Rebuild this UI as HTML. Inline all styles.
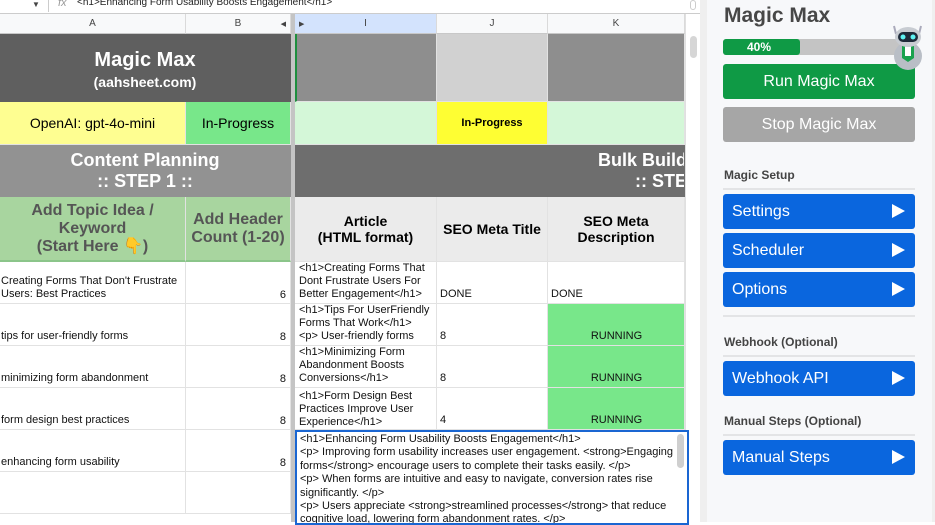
<!DOCTYPE html>
<html><head><meta charset="utf-8"><style>
*{margin:0;padding:0;box-sizing:border-box}
body{width:935px;height:522px;overflow:hidden;background:#fff;font-family:"Liberation Sans",Arial,sans-serif;position:relative}
.a{position:absolute}
.c{position:absolute;border-right:1px solid #e2e2e2;border-bottom:1px solid #e2e2e2;display:flex;align-items:center;justify-content:center;text-align:center;overflow:hidden}
.hd{font-size:10px;color:#444;background:#f8f9fa;border-right:1px solid #dadada;border-bottom:1px solid #c8c8c8}
.t{font-size:11px;color:#111;line-height:13px;justify-content:flex-start;text-align:left;align-items:flex-end;padding:0 0 2px 1px;white-space:nowrap}
.n{font-size:11px;color:#111;justify-content:flex-end;align-items:flex-end;padding:0 4px 2px 0}
.btn{position:absolute;left:723px;width:192px;height:35px;border-radius:3px;color:#fff;font-size:16px;display:flex;align-items:center}
.blue{background:#0a66de;padding-left:9px}
.blue:after{content:"";position:absolute;right:10px;top:10px;border-left:13px solid #fff;border-top:7.5px solid transparent;border-bottom:7.5px solid transparent}
.lbl{position:absolute;left:724px;font-size:12px;font-weight:bold;color:#444}
.sep{position:absolute;left:723px;width:192px;height:2px;background:#e3e4e6}
</style></head><body>
<div class="a" style="left:0;top:0;width:700px;height:14px;background:#fff;border-bottom:1px solid #ccc"></div>
<div class="a" style="left:32px;top:0;font-size:8px;color:#444">▼</div>
<div class="a" style="left:48px;top:0;width:1px;height:12px;background:#ccc"></div>
<div class="a" style="left:58px;top:-3px;font-size:11px;color:#999;font-style:italic">fx</div>
<div class="a" style="left:77px;top:-3px;font-size:10px;color:#222">&lt;h1&gt;Enhancing Form Usability Boosts Engagement&lt;/h1&gt;</div>
<div class="a" style="left:690px;top:0;width:6px;height:10px;border:1px solid #ccc;border-radius:3px"></div>
<div class="c hd" style="left:0;top:14px;width:186px;height:20px">A</div>
<div class="c hd" style="left:186px;top:14px;width:105px;height:20px">B<span style="position:absolute;right:4px;font-size:7px">◀</span></div>
<div class="a" style="left:291px;top:14px;width:4px;height:508px;background:#c4c4c4"></div>
<div class="c hd" style="left:295px;top:14px;width:142px;height:20px;background:#d3e3fd">I<span style="position:absolute;left:4px;font-size:7px">▶</span></div>
<div class="c hd" style="left:437px;top:14px;width:111px;height:20px">J</div>
<div class="c hd" style="left:548px;top:14px;width:137px;height:20px">K</div>
<div class="a" style="left:685px;top:14px;width:15px;height:508px;background:#fff;border-left:1px solid #e0e0e0"></div>
<div class="a" style="left:690px;top:36px;width:7px;height:22px;background:#d6d6d6;border-radius:4px"></div>
<div class="c" style="left:0;top:34px;width:291px;height:68px;background:#5f5f5f;color:#fff;flex-direction:column;border-color:#5f5f5f;padding-top:4px"><div style="font-size:20px;font-weight:bold">Magic Max</div><div style="font-size:14px;font-weight:bold;margin-top:2px">(aahsheet.com)</div></div>
<div class="c" style="left:295px;top:34px;width:142px;height:68px;background:#8e8e8e;border-left:2px solid #1e8e3e"></div>
<div class="c" style="left:437px;top:34px;width:111px;height:68px;background:#d1d1d1"></div>
<div class="c" style="left:548px;top:34px;width:137px;height:68px;background:#8e8e8e"></div>
<div class="c" style="left:0;top:102px;width:186px;height:43px;background:#fefe91;font-size:14px">OpenAI: gpt-4o-mini</div>
<div class="c" style="left:186px;top:102px;width:105px;height:43px;background:#78e78a;font-size:14px">In-Progress</div>
<div class="c" style="left:295px;top:102px;width:142px;height:43px;background:#d4f7d8"></div>
<div class="c" style="left:437px;top:102px;width:111px;height:43px;background:#fefe33;font-size:11px;font-weight:bold">In-Progress</div>
<div class="c" style="left:548px;top:102px;width:137px;height:43px;background:#d4f7d8"></div>
<div class="c" style="left:0;top:145px;width:291px;height:52px;background:#929292;color:#fff;font-size:18px;font-weight:bold;line-height:21px;border-color:#929292">Content Planning<br>:: STEP 1 ::</div>
<div class="c" style="left:295px;top:145px;width:390px;height:52px;background:#6e6e6e;color:#fff;font-size:18px;font-weight:bold;line-height:21px;justify-content:flex-end;text-align:right;padding-right:0;border-color:#6e6e6e;white-space:nowrap"><div style="margin-right:-3px">Bulk Build<br>:: STE</div></div>
<div class="c" style="left:0;top:197px;width:186px;height:65px;background:#a8d59f;color:#555;font-size:16px;font-weight:bold;line-height:18px;border-bottom:2px solid #8bc58a">Add Topic Idea /<br>Keyword<br>(Start Here 👇)</div>
<div class="c" style="left:186px;top:197px;width:105px;height:65px;background:#a8d59f;color:#555;font-size:16px;font-weight:bold;line-height:18px;border-bottom:2px solid #8bc58a">Add Header<br>Count (1-20)</div>
<div class="c" style="left:295px;top:197px;width:142px;height:65px;background:#ebebeb;font-size:14px;font-weight:bold;line-height:16px">Article<br>(HTML format)</div>
<div class="c" style="left:437px;top:197px;width:111px;height:65px;background:#ebebeb;font-size:14px;font-weight:bold">SEO Meta Title</div>
<div class="c" style="left:548px;top:197px;width:137px;height:65px;background:#ebebeb;font-size:14px;font-weight:bold;line-height:16px">SEO Meta<br>Description</div>

<div class="c t" style="left:0;top:262px;width:186px;height:42px">Creating Forms That Don't Frustrate<br>Users: Best Practices</div>
<div class="c n" style="left:186px;top:262px;width:105px;height:42px">6</div>
<div class="c t" style="left:295px;top:262px;width:142px;height:42px;padding-left:4px">&lt;h1&gt;Creating Forms That<br>Dont Frustrate Users For<br>Better Engagement&lt;/h1&gt;</div>
<div class="c t" style="left:437px;top:262px;width:111px;height:42px;padding-left:3px">DONE</div>
<div class="c t" style="left:548px;top:262px;width:137px;height:42px;padding-left:3px">DONE</div>

<div class="c t" style="left:0;top:304px;width:186px;height:42px">tips for user-friendly forms</div>
<div class="c n" style="left:186px;top:304px;width:105px;height:42px">8</div>
<div class="c t" style="left:295px;top:304px;width:142px;height:42px;padding-left:4px">&lt;h1&gt;Tips For UserFriendly<br>Forms That Work&lt;/h1&gt;<br>&lt;p&gt; User-friendly forms</div>
<div class="c t" style="left:437px;top:304px;width:111px;height:42px;padding-left:3px">8</div>
<div class="c t" style="left:548px;top:304px;width:137px;height:42px;background:#78e78a;justify-content:center">RUNNING</div>

<div class="c t" style="left:0;top:346px;width:186px;height:42px">minimizing form abandonment</div>
<div class="c n" style="left:186px;top:346px;width:105px;height:42px">8</div>
<div class="c t" style="left:295px;top:346px;width:142px;height:42px;padding-left:4px">&lt;h1&gt;Minimizing Form<br>Abandonment Boosts<br>Conversions&lt;/h1&gt;</div>
<div class="c t" style="left:437px;top:346px;width:111px;height:42px;padding-left:3px">8</div>
<div class="c t" style="left:548px;top:346px;width:137px;height:42px;background:#78e78a;justify-content:center">RUNNING</div>

<div class="c t" style="left:0;top:388px;width:186px;height:42px">form design best practices</div>
<div class="c n" style="left:186px;top:388px;width:105px;height:42px">8</div>
<div class="c t" style="left:295px;top:388px;width:142px;height:42px;padding-left:4px;align-items:flex-start;padding-top:2px">&lt;h1&gt;Form Design Best<br>Practices Improve User<br>Experience&lt;/h1&gt;</div>
<div class="c t" style="left:437px;top:388px;width:111px;height:42px;padding-left:3px">4</div>
<div class="c t" style="left:548px;top:388px;width:137px;height:42px;background:#78e78a;justify-content:center">RUNNING</div>

<div class="c t" style="left:0;top:430px;width:186px;height:42px">enhancing form usability</div>
<div class="c n" style="left:186px;top:430px;width:105px;height:42px">8</div>
<div class="c" style="left:0;top:472px;width:186px;height:42px"></div>
<div class="c" style="left:186px;top:472px;width:105px;height:42px"></div>
<div class="a" style="left:295px;top:430px;width:394px;height:95px;background:#fff;border:2px solid #1a66d2;font-size:11px;line-height:13.4px;color:#111;padding:1px 14px 0 3px;overflow:hidden">&lt;h1&gt;Enhancing Form Usability Boosts Engagement&lt;/h1&gt;<br>&lt;p&gt; Improving form usability increases user engagement. &lt;strong&gt;Engaging forms&lt;/strong&gt; encourage users to complete their tasks easily. &lt;/p&gt;<br>&lt;p&gt; When forms are intuitive and easy to navigate, conversion rates rise significantly. &lt;/p&gt;<br>&lt;p&gt; Users appreciate &lt;strong&gt;streamlined processes&lt;/strong&gt; that reduce cognitive load, lowering form abandonment rates. &lt;/p&gt;<br>&lt;p&gt; Statistics show that simple forms can boost conversions</div>
<div class="a" style="left:677px;top:434px;width:7px;height:34px;background:#cfcfcf;border-radius:4px"></div>

<div class="a" style="left:700px;top:0;width:235px;height:522px;background:#efefef"></div>
<div class="a" style="left:707px;top:0;width:225px;height:522px;background:#f7f8fa"></div>
<div class="a" style="left:724px;top:4px;font-size:21px;font-weight:bold;color:#474747">Magic Max</div>
<div class="a" style="left:723px;top:39px;width:192px;height:16px;background:#c4c4c4;border-radius:3px"></div>
<div class="a" style="left:723px;top:39px;width:77px;height:16px;background:#0f9a45;border-radius:3px;color:#fff;font-size:12px;font-weight:bold;padding-left:24px;line-height:16px">40%</div>
<div class="btn" style="top:64px;background:#0f9a45;justify-content:center">Run Magic Max</div>
<div class="btn" style="top:107px;background:#a6a6a6;justify-content:center">Stop Magic Max</div>
<svg class="a" style="left:888px;top:24px" width="40" height="48" viewBox="0 0 40 48">
<line x1="8" y1="10" x2="6" y2="2" stroke="#aab" stroke-width="2"/><line x1="31" y1="10" x2="33" y2="2" stroke="#aab" stroke-width="2"/>
<ellipse cx="20" cy="32" rx="14" ry="14" fill="#b9bec6"/>
<path d="M14 22 h12 v12 l-6 4 l-6-4z" fill="#19a24e"/><rect x="17" y="22" width="6" height="10" fill="#fff"/>
<ellipse cx="20" cy="13" rx="13" ry="10" fill="#c8ccd2"/>
<rect x="10" y="8" width="20" height="10" rx="5" fill="#1f2b3a"/>
<circle cx="15" cy="13" r="2.5" fill="#5ef2f2"/><circle cx="25" cy="13" r="2.5" fill="#5ef2f2"/>
</svg>
<div class="lbl" style="top:168px">Magic Setup</div>
<div class="sep" style="top:188px"></div>
<div class="btn blue" style="top:194px">Settings</div>
<div class="btn blue" style="top:233px">Scheduler</div>
<div class="btn blue" style="top:272px">Options</div>
<div class="sep" style="top:315px"></div>
<div class="lbl" style="top:335px">Webhook (Optional)</div>
<div class="sep" style="top:355px"></div>
<div class="btn blue" style="top:361px">Webhook API</div>
<div class="lbl" style="top:414px">Manual Steps (Optional)</div>
<div class="sep" style="top:434px"></div>
<div class="btn blue" style="top:440px">Manual Steps</div>
</body></html>
